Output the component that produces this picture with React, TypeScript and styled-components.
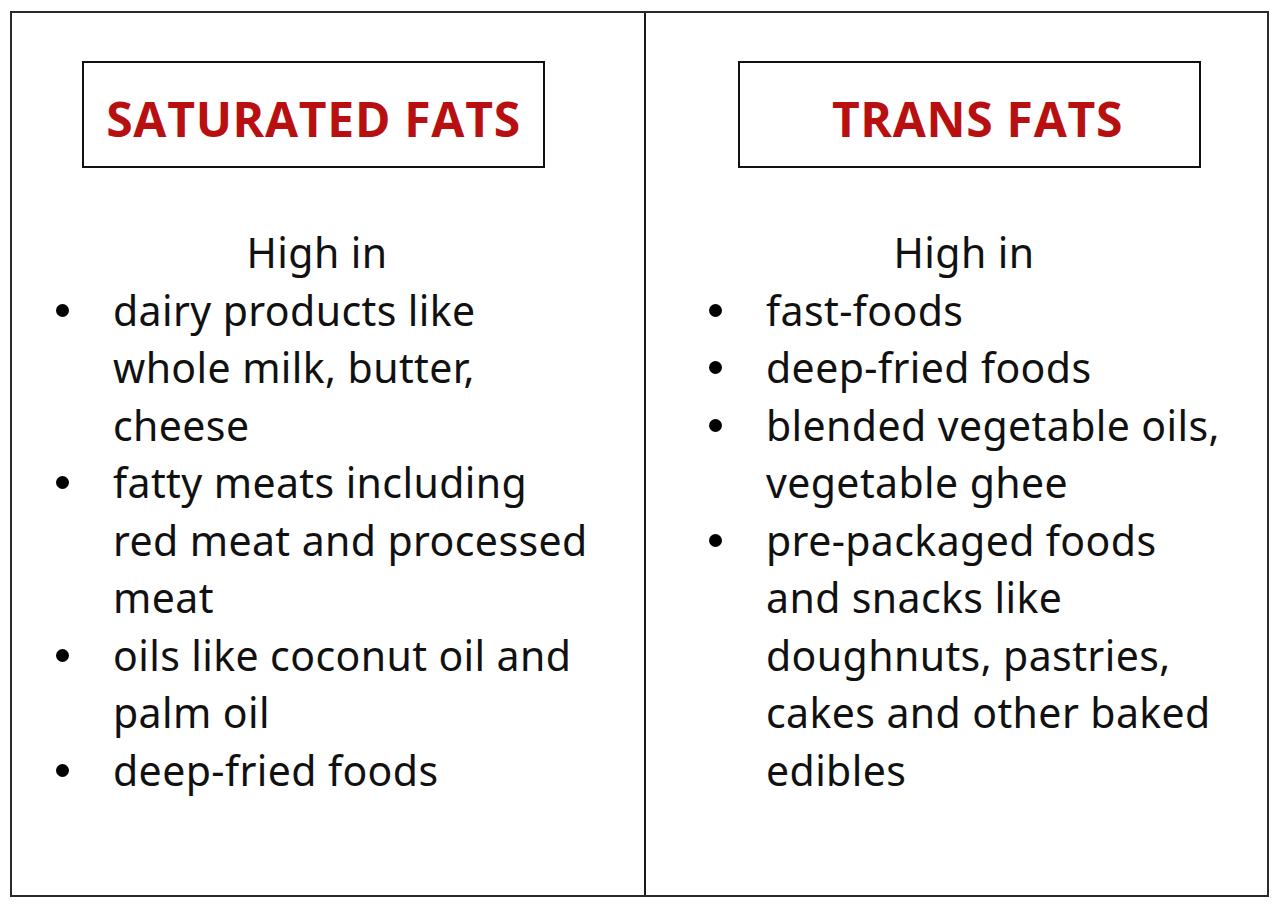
import React from "react";
import styled, { createGlobalStyle } from "styled-components";

const Global = createGlobalStyle`
  html, body { margin: 0; padding: 0; background: #ffffff; }
  body { width: 1280px; height: 908px; overflow: hidden; }
`;

const Frame = styled.div`
  box-sizing: border-box;
  margin: 11px 0 0 10px;
  width: 1259px;
  height: 886px;
  border: 2px solid #2a2a2a;
  display: grid;
  grid-template-columns: 634px 1fr;
`;

const Column = styled.section<{ $padLeft: number; $divider?: boolean }>`
  box-sizing: border-box;
  padding: 48px 0 0 ${(p) => p.$padLeft}px;
  border-right: ${(p) => (p.$divider ? "2px solid #1a1a1a" : "none")};
  display: flex;
  flex-direction: column;
`;

const TitleBox = styled.div<{ $offset: number; $shift: number }>`
  box-sizing: border-box;
  width: 463px;
  height: 107px;
  margin-left: ${(p) => p.$offset}px;
  border: 2px solid #111;
  display: flex;
  align-items: center;
  justify-content: center;
  padding: 8px 0 0 ${(p) => p.$shift * 2}px;
`;

const Title = styled.h2`
  margin: 0;
  font-family: "Open Sans", "Liberation Sans", sans-serif;
  font-weight: 700;
  font-size: 48px;
  letter-spacing: 0.7px;
  color: #b81010;
  line-height: 1;
`;

const Body = styled.div`
  margin-top: 56px;
  font-family: "Noto Sans", "Open Sans", sans-serif;
  font-size: 41px;
  letter-spacing: 0.4px;
  line-height: 57.5px;
  color: #111;
`;

const Heading = styled.div<{ $center: number }>`
  width: ${(p) => p.$center * 2}px;
  text-align: center;
`;

const List = styled.ul`
  list-style: none;
  margin: 0;
  padding: 0;
`;

const Item = styled.li`
  display: grid;
  grid-template-columns: 51px 1fr;
  align-items: start;
`;

const Dot = styled.span`
  display: block;
  width: 13px;
  height: 13px;
  border-radius: 50%;
  background: #000;
  margin: 22px 0 0 -6px;
`;

const Lines = styled.div`
  white-space: nowrap;
`;

type Col = {
  title: string;
  padLeft: number;
  boxOffset: number;
  titleShift: number;
  headCenter: number;
  items: string[][];
};

const columns: Col[] = [
  {
    title: "SATURATED FATS",
    padLeft: 50,
    boxOffset: 20,
    titleShift: 0,
    headCenter: 255,
    items: [
      ["dairy products like", "whole milk, butter,", "cheese"],
      ["fatty meats including", "red meat and processed", "meat"],
      ["oils like coconut oil and", "palm oil"],
      ["deep-fried foods"],
    ],
  },
  {
    title: "TRANS FATS",
    padLeft: 69,
    boxOffset: 23,
    titleShift: 8,
    headCenter: 249,
    items: [
      ["fast-foods"],
      ["deep-fried foods"],
      ["blended vegetable oils,", "vegetable ghee"],
      ["pre-packaged foods", "and snacks like", "doughnuts, pastries,", "cakes and other baked", "edibles"],
    ],
  },
];

export default function App() {
  return (
    <>
      <Global />
      <Frame>
        {columns.map((c, i) => (
          <Column key={c.title} $padLeft={c.padLeft} $divider={i === 0}>
            <TitleBox $offset={c.boxOffset} $shift={c.titleShift}>
              <Title>{c.title}</Title>
            </TitleBox>
            <Body>
              <Heading $center={c.headCenter}>High in</Heading>
              <List>
                {c.items.map((lines, j) => (
                  <Item key={j}>
                    <Dot />
                    <Lines>
                      {lines.map((l, k) => (
                        <React.Fragment key={k}>
                          {k > 0 && <br />}
                          {l}
                        </React.Fragment>
                      ))}
                    </Lines>
                  </Item>
                ))}
              </List>
            </Body>
          </Column>
        ))}
      </Frame>
    </>
  );
}
